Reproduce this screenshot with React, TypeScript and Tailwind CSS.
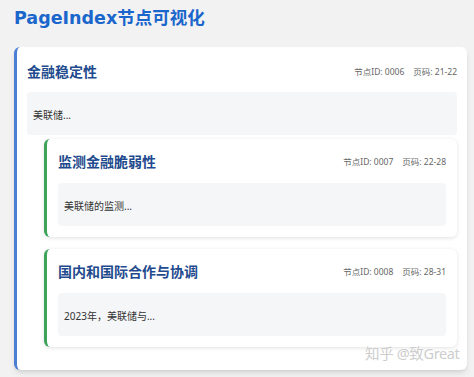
const cjk = '"Noto Sans", "Noto Sans CJK SC", sans-serif';

type Node = {
  title: string;
  id: string;
  pages: string;
  text: string;
};

const children: Node[] = [
  { title: "监测金融脆弱性", id: "0007", pages: "22-28", text: "美联储的监测..." },
  { title: "国内和国际合作与协调", id: "0008", pages: "28-31", text: "2023年，美联储与..." },
];

function Header({ node }: { node: Node }) {
  return (
    <div className="flex items-center justify-between h-5">
      <h2 className="text-[14px] font-bold text-[#1f4b8e] leading-5">{node.title}</h2>
      <div className="flex gap-[9px] text-[8.5px] text-[#666]">
        <span>节点ID: {node.id}</span>
        <span>页码: {node.pages}</span>
      </div>
    </div>
  );
}

function Content({ text }: { text: string }) {
  return (
    <div className="h-[43px] flex items-center px-[6px] pt-[3px] bg-[#f5f6f8] rounded-sm text-[10px] text-[#333]">
      {text}
    </div>
  );
}

export default function App() {
  return (
    <div className="relative w-[474px] h-[377px] bg-[#f2f2f2] px-[14px] overflow-hidden" style={{ fontFamily: cjk }}>
      <h1
        className="pt-[5px] text-[17.5px] font-bold text-[#1a66cc] leading-[26px]"
        style={{ fontFamily: '"DejaVu Sans", "Noto Sans CJK SC", sans-serif' }}
      >
        PageIndex节点可视化
      </h1>
      <div className="mt-[16px] w-[453px] bg-white rounded-md border-l-[3px] border-[#4a7fd4] shadow-md pt-[15px] px-[10px] pb-[23px]">
        <Header node={{ title: "金融稳定性", id: "0006", pages: "21-22", text: "" }} />
        <div className="mt-[10px]">
          <Content text="美联储..." />
        </div>
        <div className="mt-[4px] ml-[17px] flex flex-col gap-3">
          {children.map((c) => (
            <div
              key={c.id}
              className="bg-white rounded-md border-l-[3px] border-[#3da35a] shadow-[0_1px_4px_rgba(0,0,0,0.12)] pt-[13px] pl-[11px] pr-[11px] pb-[11px]"
            >
              <Header node={c} />
              <div className="mt-[11px]">
                <Content text={c.text} />
              </div>
            </div>
          ))}
        </div>
      </div>
      <div
        className="absolute left-[365px] top-[343px] text-[14.5px] text-[#cdcdcd] tracking-tight"
        style={{ textShadow: "0 0 2px #fff, 0 0 1px #fff" }}
      >
        知乎 @致Great
      </div>
    </div>
  );
}
